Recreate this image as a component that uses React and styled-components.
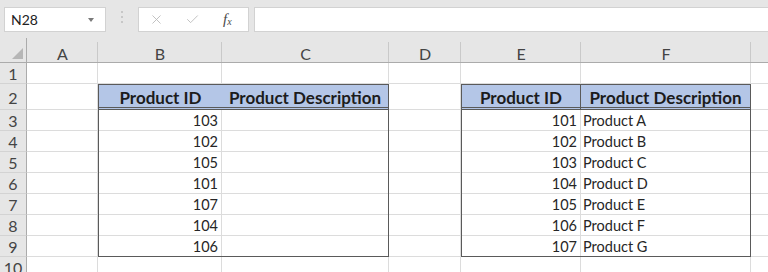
import React from "react";
import styled, { createGlobalStyle } from "styled-components";
import { X, Check } from "lucide-react";

const GlobalStyle = createGlobalStyle`
  html, body { margin: 0; padding: 0; background: #ffffff; overflow: hidden; }
  body { font-family: Lato, "Noto Sans", sans-serif; }
`;

const GRID_LINE = "#dcdcdc";
const HEAD_BG = "#e6e6e6";
const TABLE_EDGE = "#5a5a5a";
const TABLE_HEAD = "#b4c6e7";

const Page = styled.div`
  width: 768px;
  height: 272px;
  overflow: hidden;
  background: #ffffff;
`;

const Toolbar = styled.div`
  height: 38px;
  background: ${HEAD_BG};
  display: flex;
  align-items: flex-start;
  padding: 7px 0 0 4px;
  box-sizing: border-box;
`;

const Box = styled.div`
  height: 25px;
  background: #ffffff;
  border: 1px solid #d2d2d2;
  box-sizing: border-box;
  display: flex;
  align-items: center;
`;

const NameBox = styled(Box)`
  width: 102px;
  padding: 0 0 0 6px;
  justify-content: space-between;
  font-size: 14px;
  color: #222222;
`;

const Caret = styled.span`
  width: 0;
  height: 0;
  border-left: 3.5px solid transparent;
  border-right: 3.5px solid transparent;
  border-top: 4px solid #7a7a7a;
  margin-right: 11px;
`;

const Grip = styled.div`
  width: 32px;
  align-self: stretch;
  display: flex;
  flex-direction: column;
  align-items: center;
  justify-content: center;
  gap: 3px;
  padding-bottom: 12px;
  box-sizing: border-box;
  span {
    width: 2px;
    height: 2px;
    border-radius: 1px;
    background: #bdbdbd;
  }
`;

const FnBox = styled(Box)`
  width: 111px;
  padding: 0 0 0 10px;
`;

const FnIcon = styled.span`
  width: 36px;
  display: flex;
  align-items: center;
  color: #b9b9b9;
`;

const Fx = styled.span`
  font-family: "Liberation Serif", "DejaVu Serif", serif;
  font-style: italic;
  font-size: 15px;
  color: #4a4a4a;
  padding-left: 2px;
  sub {
    font-size: 10px;
    vertical-align: -1px;
  }
`;

const FormulaInput = styled(Box)`
  flex: 1;
  margin-left: 5px;
  border-right: none;
`;

const Sheet = styled.div`
  display: grid;
  grid-template-columns: 27px 71px 124px 167px 72px 120px 170px 100px;
  grid-template-rows: 25px 21px 26px repeat(7, 21px) 21px;
  width: max-content;
`;

const Corner = styled.div`
  grid-row: 1;
  grid-column: 1;
  background: ${HEAD_BG};
  border-right: 1px solid #ababab;
  border-bottom: 1px solid #ababab;
  box-sizing: border-box;
  display: flex;
  align-items: flex-end;
  justify-content: flex-end;
  padding: 0 3px 3px 0;
`;

const ColHead = styled.div`
  grid-row: 1;
  grid-column: ${(p) => p.$col};
  background:
    linear-gradient(#c9c9c9, #c9c9c9) right bottom / 1px calc(100% - 4px) no-repeat,
    ${HEAD_BG};
  border-bottom: 1px solid #ababab;
  box-sizing: border-box;
  display: flex;
  align-items: center;
  justify-content: center;
  padding-top: 6px;
  font-size: 16px;
  color: #444444;
`;

const RowHead = styled.div`
  grid-row: ${(p) => p.$row};
  grid-column: 1;
  background: ${HEAD_BG};
  border-right: 1px solid #ababab;
  border-bottom: 1px solid #d3d3d3;
  box-sizing: border-box;
  display: flex;
  align-items: center;
  justify-content: center;
  font-size: 16px;
  color: #444444;
  padding-top: 1px;
`;

const Cell = styled.div`
  grid-row: ${(p) => p.$row};
  grid-column: ${(p) => p.$col};
  border-right: 1px solid ${GRID_LINE};
  border-bottom: 1px solid ${GRID_LINE};
  box-sizing: border-box;
  background: #ffffff;
`;

const Table = styled.div`
  grid-column: ${(p) => p.$col};
  grid-row: 3 / 11;
  display: grid;
  grid-template-columns: ${(p) => p.$first}px 1fr;
  grid-template-rows: 25px repeat(6, 21px) 1fr;
  border: 1px solid ${TABLE_EDGE};
  background: #ffffff;
  position: relative;
  z-index: 1;
`;

const HeadCell = styled.div`
  background: ${TABLE_HEAD};
  border-bottom: 3px double ${TABLE_EDGE};
  border-right: ${(p) => (p.$divider ? `1px solid ${TABLE_EDGE}` : "none")};
  box-sizing: border-box;
  display: flex;
  align-items: center;
  justify-content: center;
  font-weight: 700;
  font-size: 17px;
  color: #1c1c1c;
  padding-top: 2px;
  white-space: nowrap;
`;

const DataCell = styled.div`
  border-bottom: ${(p) => (p.$last ? "none" : `1px solid ${GRID_LINE}`)};
  border-right: ${(p) => (p.$divider ? `1px solid ${GRID_LINE}` : "none")};
  box-sizing: border-box;
  display: flex;
  align-items: center;
  justify-content: ${(p) => (p.$num ? "flex-end" : "flex-start")};
  padding: ${(p) => (p.$num ? "1px 3px 0 0" : "1px 0 0 2px")};
  font-size: 14.5px;
  color: #262626;
`;

// G is only partly on screen, so its header letter is out of view
const columns = ["A", "B", "C", "D", "E", "F", ""];
const rows = [1, 2, 3, 4, 5, 6, 7, 8, 9, 10];

const lookupIds = [103, 102, 105, 101, 107, 104, 106];
const catalog = [
  [101, "Product A"],
  [102, "Product B"],
  [103, "Product C"],
  [104, "Product D"],
  [105, "Product E"],
  [106, "Product F"],
  [107, "Product G"],
];

export default function App() {
  return (
    <Page>
      <GlobalStyle />
      <Toolbar>
        <NameBox>
          <span>N28</span>
          <Caret />
        </NameBox>
        <Grip>
          <span />
          <span />
          <span />
        </Grip>
        <FnBox>
          <FnIcon>
            <X size={15} strokeWidth={1.4} />
          </FnIcon>
          <FnIcon>
            <Check size={15} strokeWidth={1.4} />
          </FnIcon>
          <Fx>
            f<sub>x</sub>
          </Fx>
        </FnBox>
        <FormulaInput />
      </Toolbar>

      <Sheet>
        <Corner>
          <svg width="11" height="11" viewBox="0 0 11 11">
            <polygon points="11,0 11,11 0,11" fill="#b6b6b6" />
          </svg>
        </Corner>
        {columns.map((c, ci) => (
          <ColHead key={ci} $col={ci + 2}>
            {c}
          </ColHead>
        ))}
        {rows.map((r) => (
          <React.Fragment key={r}>
            <RowHead $row={r + 1}>{r}</RowHead>
            {columns.map((c, ci) => (
              <Cell key={ci} $row={r + 1} $col={ci + 2} />
            ))}
          </React.Fragment>
        ))}

        <Table $col="3 / 5" $first={123}>
          <HeadCell>Product ID</HeadCell>
          <HeadCell>Product Description</HeadCell>
          {lookupIds.map((id, i) => (
            <React.Fragment key={id}>
              <DataCell $num $divider $last={i === lookupIds.length - 1}>
                {id}
              </DataCell>
              <DataCell $last={i === lookupIds.length - 1} />
            </React.Fragment>
          ))}
        </Table>

        <Table $col="6 / 8" $first={119}>
          <HeadCell $divider>Product ID</HeadCell>
          <HeadCell>Product Description</HeadCell>
          {catalog.map(([id, name], i) => (
            <React.Fragment key={id}>
              <DataCell $num $divider $last={i === catalog.length - 1}>
                {id}
              </DataCell>
              <DataCell $last={i === catalog.length - 1}>{name}</DataCell>
            </React.Fragment>
          ))}
        </Table>
      </Sheet>
    </Page>
  );
}
